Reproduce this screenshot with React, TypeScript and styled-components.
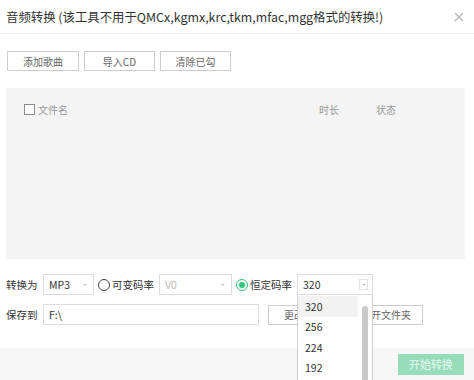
import React from 'react';
import styled, { createGlobalStyle, css } from 'styled-components';

const GlobalStyle = createGlobalStyle`
  html, body {
    margin: 0;
    padding: 0;
    background: #ffffff;
  }
  body {
    font-family: "Noto Sans CJK SC", "Noto Sans", sans-serif;
  }
`;

const Dialog = styled.div`
  position: relative;
  width: 474px;
  height: 380px;
  overflow: hidden;
  background: #ffffff;
  color: #333333;
`;

const TitleBar = styled.div`
  height: 34px;
  box-sizing: border-box;
  padding: 0 10px 0 6px;
  display: flex;
  align-items: center;
  justify-content: space-between;
  border-bottom: 1px solid #f0f0f0;
`;

const Title = styled.div`
  font-size: 12.4px;
  color: #333333;
  white-space: nowrap;
`;

const CloseButton = styled.div`
  width: 10px;
  height: 10px;
  display: flex;
  align-items: center;
  justify-content: center;
`;

const Toolbar = styled.div`
  display: flex;
  gap: 5px;
  padding: 17px 0 0 7px;
`;

const Button = styled.div<{ $width?: number }>`
  width: ${(p) => p.$width ?? 72}px;
  height: 20px;
  box-sizing: border-box;
  border: 1px solid #cccccc;
  background: #ffffff;
  color: #666666;
  font-size: 10px;
  display: flex;
  align-items: center;
  justify-content: center;
  white-space: nowrap;
`;

const ListArea = styled.div`
  margin: 17px 9px 0 6px;
  height: 171px;
  background: #f4f4f4;
`;

const ListHeader = styled.div`
  display: grid;
  grid-template-columns: 295px 57px 1fr;
  align-items: center;
  padding: 14px 0 0 18px;
  font-size: 10px;
  color: #999999;
`;

const NameCell = styled.div`
  display: flex;
  align-items: center;
  gap: 3px;
`;

const CheckBox = styled.span`
  width: 11px;
  height: 11px;
  box-sizing: border-box;
  border: 1px solid #8a8a8a;
  background: #ffffff;
`;

const FormRow = styled.div<{ $top: number }>`
  display: flex;
  align-items: center;
  height: 21px;
  margin-top: ${(p) => p.$top}px;
  padding-left: 6px;
  font-size: 10.5px;
  color: #333333;
`;

const Label = styled.div`
  width: 37px;
  white-space: nowrap;
`;

const SelectWrap = styled.div`
  position: relative;
`;

const Select = styled.div<{ $width: number; $disabled?: boolean }>`
  width: ${(p) => p.$width}px;
  height: 21px;
  box-sizing: border-box;
  border: 1px solid #dddddd;
  background: #ffffff;
  display: flex;
  align-items: center;
  justify-content: space-between;
  padding: 0 4px 0 5px;
  font-size: 10.5px;
  color: ${(p) => (p.$disabled ? '#bbbbbb' : '#333333')};
`;

const Arrow = styled.span<{ $boxed?: boolean }>`
  width: 9px;
  height: 11px;
  box-sizing: border-box;
  display: flex;
  align-items: center;
  justify-content: center;
  ${(p) =>
    p.$boxed &&
    css`
      border: 1px solid #e2e2e2;
    `}
  &::after {
    content: '';
    border-left: 2px solid transparent;
    border-right: 2px solid transparent;
    border-top: 2px solid #c4c4c4;
  }
`;

const RadioOption = styled.div`
  display: flex;
  align-items: center;
  gap: 2px;
  margin: 0 5px 0 4px;
  white-space: nowrap;
`;

const Radio = styled.span<{ $checked?: boolean }>`
  width: 12px;
  height: 12px;
  box-sizing: border-box;
  border-radius: 50%;
  border: 1px solid ${(p) => (p.$checked ? '#31c27c' : '#444444')};
  display: flex;
  align-items: center;
  justify-content: center;
  &::after {
    content: '';
    width: 6px;
    height: 6px;
    border-radius: 50%;
    background: ${(p) => (p.$checked ? '#31c27c' : 'transparent')};
  }
`;

const PathInput = styled.div`
  width: 216px;
  height: 21px;
  box-sizing: border-box;
  border: 1px solid #dddddd;
  display: flex;
  align-items: center;
  padding-left: 5px;
  font-size: 10.5px;
  color: #333333;
`;

const PathButtons = styled.div`
  display: flex;
  gap: 9px;
  margin-left: 9px;
`;

const Menu = styled.div`
  position: absolute;
  left: 0;
  top: 21px;
  width: 76px;
  height: 110px;
  box-sizing: border-box;
  border: 1px solid #cfcfcf;
  border-top: none;
  background: #ffffff;
  z-index: 5;
  display: flex;
`;

const MenuList = styled.div`
  flex: 1;
  padding-top: 1px;
`;

const MenuItem = styled.div<{ $active?: boolean }>`
  height: 20.5px;
  display: flex;
  align-items: center;
  padding-left: 7px;
  font-size: 10.5px;
  color: #333333;
  background: ${(p) => (p.$active ? '#f2f2f2' : 'transparent')};
`;

const ScrollTrack = styled.div`
  width: 14px;
  display: flex;
  justify-content: center;
  padding-top: 11px;
`;

const ScrollThumb = styled.div`
  width: 6px;
  height: 100px;
  border-radius: 3px;
  background: #c9c9c9;
`;

const Footer = styled.div`
  position: absolute;
  left: 0;
  right: 0;
  bottom: 0;
  height: 32px;
  background: #f7f7f7;
  display: flex;
  align-items: center;
  justify-content: flex-end;
  padding-right: 10px;
`;

const StartButton = styled.div`
  width: 66px;
  height: 21px;
  background: #97ddbb;
  color: #e8f7ef;
  font-size: 11px;
  display: flex;
  align-items: center;
  justify-content: center;
`;

const bitrates = ['320', '256', '224', '192'];

const App: React.FC = () => (
  <>
    <GlobalStyle />
    <Dialog>
      <TitleBar>
        <Title>音频转换 (该工具不用于QMCx,kgmx,krc,tkm,mfac,mgg格式的转换!)</Title>
        <CloseButton>
          <svg width="10" height="10" viewBox="0 0 10 10">
            <path d="M1 1L9 9M9 1L1 9" stroke="#b5b5b5" strokeWidth="1.2" />
          </svg>
        </CloseButton>
      </TitleBar>

      <Toolbar>
        <Button>添加歌曲</Button>
        <Button $width={71}>导入CD</Button>
        <Button $width={71}>清除已勾</Button>
      </Toolbar>

      <ListArea>
        <ListHeader>
          <NameCell>
            <CheckBox />
            文件名
          </NameCell>
          <div>时长</div>
          <div>状态</div>
        </ListHeader>
      </ListArea>

      <FormRow $top={15}>
        <Label>转换为</Label>
        <Select $width={51}>
          MP3
          <Arrow />
        </Select>
        <RadioOption>
          <Radio />
          可变码率
        </RadioOption>
        <Select $width={73} $disabled>
          V0
          <Arrow />
        </Select>
        <RadioOption>
          <Radio $checked />
          恒定码率
        </RadioOption>
        <SelectWrap>
          <Select $width={76}>
            320
            <Arrow $boxed />
          </Select>
          <Menu>
            <MenuList>
              {bitrates.map((b, i) => (
                <MenuItem key={b} $active={i === 0}>
                  {b}
                </MenuItem>
              ))}
            </MenuList>
            <ScrollTrack>
              <ScrollThumb />
            </ScrollTrack>
          </Menu>
        </SelectWrap>
      </FormRow>

      <FormRow $top={9}>
        <Label>保存到</Label>
        <PathInput>F:\</PathInput>
        <PathButtons>
          <Button $width={72}>更改目录</Button>
          <Button $width={74}>打开文件夹</Button>
        </PathButtons>
      </FormRow>

      <Footer>
        <StartButton>开始转换</StartButton>
      </Footer>
    </Dialog>
  </>
);

export default App;
